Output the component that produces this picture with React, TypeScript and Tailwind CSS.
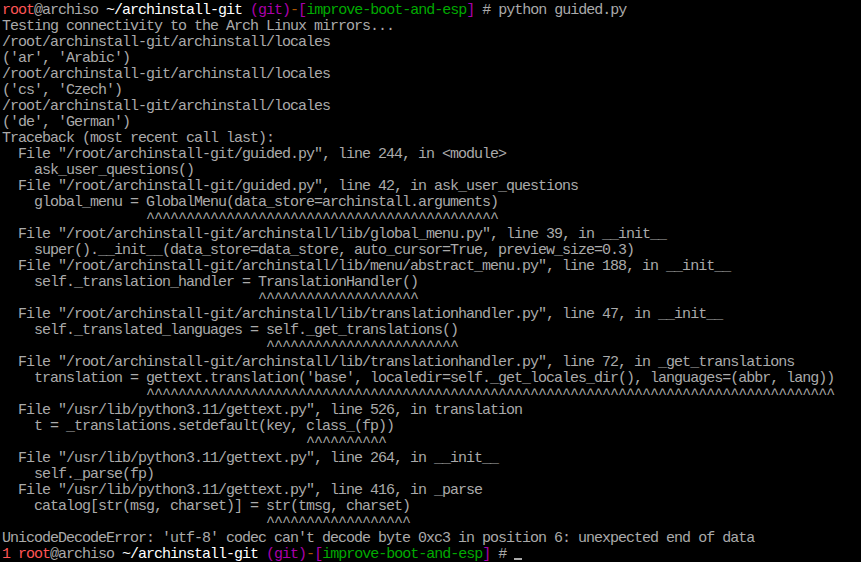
import React from "react";

const R = "text-[#ff5555]";
const M = "text-[#aa00aa]";
const Y = "text-[#aa5500]";
const G = "text-[#00aa00]";
const W = "text-[#ffffff]";

const lines: string[] = [
  "Testing connectivity to the Arch Linux mirrors...",
  "/root/archinstall-git/archinstall/locales",
  "('ar', 'Arabic')",
  "/root/archinstall-git/archinstall/locales",
  "('cs', 'Czech')",
  "/root/archinstall-git/archinstall/locales",
  "('de', 'German')",
  "Traceback (most recent call last):",
  '  File "/root/archinstall-git/guided.py", line 244, in <module>',
  "    ask_user_questions()",
  '  File "/root/archinstall-git/guided.py", line 42, in ask_user_questions',
  "    global_menu = GlobalMenu(data_store=archinstall.arguments)",
  "                  ^^^^^^^^^^^^^^^^^^^^^^^^^^^^^^^^^^^^^^^^^^^^",
  '  File "/root/archinstall-git/archinstall/lib/global_menu.py", line 39, in __init__',
  "    super().__init__(data_store=data_store, auto_cursor=True, preview_size=0.3)",
  '  File "/root/archinstall-git/archinstall/lib/menu/abstract_menu.py", line 188, in __init__',
  "    self._translation_handler = TranslationHandler()",
  "                                ^^^^^^^^^^^^^^^^^^^^",
  '  File "/root/archinstall-git/archinstall/lib/translationhandler.py", line 47, in __init__',
  "    self._translated_languages = self._get_translations()",
  "                                 ^^^^^^^^^^^^^^^^^^^^^^^^",
  '  File "/root/archinstall-git/archinstall/lib/translationhandler.py", line 72, in _get_translations',
  "    translation = gettext.translation('base', localedir=self._get_locales_dir(), languages=(abbr, lang))",
  "                  ^^^^^^^^^^^^^^^^^^^^^^^^^^^^^^^^^^^^^^^^^^^^^^^^^^^^^^^^^^^^^^^^^^^^^^^^^^^^^^^^^^^^^^",
  '  File "/usr/lib/python3.11/gettext.py", line 526, in translation',
  "    t = _translations.setdefault(key, class_(fp))",
  "                                      ^^^^^^^^^^",
  '  File "/usr/lib/python3.11/gettext.py", line 264, in __init__',
  "    self._parse(fp)",
  '  File "/usr/lib/python3.11/gettext.py", line 416, in _parse',
  "    catalog[str(msg, charset)] = str(tmsg, charset)",
  "                                 ^^^^^^^^^^^^^^^^^^",
  "UnicodeDecodeError: 'utf-8' codec can't decode byte 0xc3 in position 6: unexpected end of data",
];

function Prompt({ children }: { children?: React.ReactNode }) {
  return (
    <>
      <span className={R}>root</span>
      <span>@archiso </span>
      <span className={W}>~/archinstall-git</span>
      <span> </span>
      <span className={M}>(git)</span>
      <span className={Y}>-</span>
      <span className={M}>[</span>
      <span className={G}>improve-boot-and-esp</span>
      <span className={M}>]</span>
      <span> # </span>
      {children}
    </>
  );
}

export default function App() {
  return (
    <div
      className="w-[861px] h-[562px] overflow-hidden bg-black text-[#aaaaaa] pt-[3px] pl-[2px] text-[15px] tracking-[-1px] whitespace-pre"
      style={{ fontFamily: '"Liberation Mono", "DejaVu Sans Mono", monospace' }}
    >
      <div className="h-[16px] leading-[16px]">
        <Prompt>python guided.py</Prompt>
      </div>
      {lines.map((l, i) => (
        <div key={i} className="h-[16px] leading-[16px]">
          {l}
        </div>
      ))}
      <div className="h-[16px] leading-[16px]">
        <span className={R}>1 </span>
        <Prompt>
          <span className="relative inline-block w-[8px] h-[16px] align-top">
            <span className="absolute left-0 right-0 bottom-[3px] h-[2px] bg-[#aaaaaa]" />
          </span>
        </Prompt>
      </div>
    </div>
  );
}
